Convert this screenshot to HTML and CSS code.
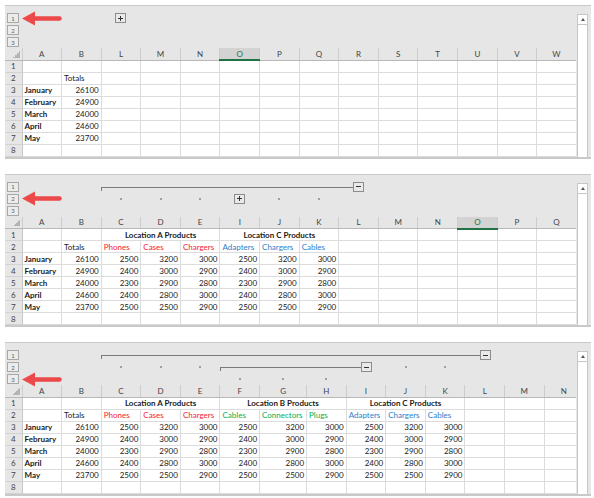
FILE: index.html
```html
<!DOCTYPE html>
<html lang="en">
<head>
    <meta charset="UTF-8">
    <title>Excel outline levels</title>
    <link rel="stylesheet" href="styles.css">
</head>
<body>
    <!-- Panel 1: level 1 collapsed -->
    <div class="sheet">
        <div class="main">
            <div class="outline cols-std">
                <div class="lvl l1">1</div>
                <div class="lvl l2">2</div>
                <div class="lvl l3">3</div>
                <svg class="arrow l1" width="40" height="15" viewBox="0 0 40 15"><path d="M0 7.5L13 0.5V14.5Z" fill="#ec4a4a"/><path d="M12 7.5H37.5" stroke="#ec4a4a" stroke-width="4.4" stroke-linecap="round"/></svg>
                <div class="btn l1" style="grid-column: 4"><svg width="5" height="5"><path d="M0 2.5H5M2.5 0V5" stroke="#333"/></svg></div>
            </div>
            <table class="grid">
                <colgroup><col class="rh"><col><col><col><col><col><col><col><col><col><col><col><col><col><col></colgroup>
                <tr class="head"><th class="corner"></th><th>A</th><th>B</th><th>L</th><th>M</th><th>N</th><th class="sel">O</th><th>P</th><th>Q</th><th>R</th><th>S</th><th>T</th><th>U</th><th>V</th><th>W</th></tr>
                <tr><th>1</th><td></td><td></td><td></td><td></td><td></td><td></td><td></td><td></td><td></td><td></td><td></td><td></td><td></td><td></td></tr>
                <tr><th>2</th><td></td><td>Totals</td><td></td><td></td><td></td><td></td><td></td><td></td><td></td><td></td><td></td><td></td><td></td><td></td></tr>
                <tr><th>3</th><td class="b">January</td><td class="n">26100</td><td></td><td></td><td></td><td></td><td></td><td></td><td></td><td></td><td></td><td></td><td></td><td></td></tr>
                <tr><th>4</th><td class="b">February</td><td class="n">24900</td><td></td><td></td><td></td><td></td><td></td><td></td><td></td><td></td><td></td><td></td><td></td><td></td></tr>
                <tr><th>5</th><td class="b">March</td><td class="n">24000</td><td></td><td></td><td></td><td></td><td></td><td></td><td></td><td></td><td></td><td></td><td></td><td></td></tr>
                <tr><th>6</th><td class="b">April</td><td class="n">24600</td><td></td><td></td><td></td><td></td><td></td><td></td><td></td><td></td><td></td><td></td><td></td><td></td></tr>
                <tr><th>7</th><td class="b">May</td><td class="n">23700</td><td></td><td></td><td></td><td></td><td></td><td></td><td></td><td></td><td></td><td></td><td></td><td></td></tr>
                <tr><th>8</th><td></td><td></td><td></td><td></td><td></td><td></td><td></td><td></td><td></td><td></td><td></td><td></td><td></td><td></td></tr>
            </table>
        </div>
        <div class="vscroll"><div class="up"></div></div>
    </div>

    <!-- Panel 2: level 2, Location B collapsed -->
    <div class="sheet">
        <div class="main">
            <div class="outline cols-std">
                <div class="lvl l1">1</div>
                <div class="lvl l2">2</div>
                <div class="lvl l3">3</div>
                <svg class="arrow l2" width="40" height="15" viewBox="0 0 40 15"><path d="M0 7.5L13 0.5V14.5Z" fill="#ec4a4a"/><path d="M12 7.5H37.5" stroke="#ec4a4a" stroke-width="4.4" stroke-linecap="round"/></svg>
                <div class="bracket l1" style="grid-column: 4 / 11"><span class="line"></span><span class="btn"><svg width="5" height="5"><path d="M0 2.5H5" stroke="#333"/></svg></span></div>
                <span class="dot l2" style="grid-column: 4"></span>
                <span class="dot l2" style="grid-column: 5"></span>
                <span class="dot l2" style="grid-column: 6"></span>
                <div class="btn l2" style="grid-column: 7"><svg width="5" height="5"><path d="M0 2.5H5M2.5 0V5" stroke="#333"/></svg></div>
                <span class="dot l2" style="grid-column: 8"></span>
                <span class="dot l2" style="grid-column: 9"></span>
            </div>
            <table class="grid">
                <colgroup><col class="rh"><col><col><col><col><col><col><col><col><col><col><col><col><col><col></colgroup>
                <tr class="head"><th class="corner"></th><th>A</th><th>B</th><th>C</th><th>D</th><th>E</th><th>I</th><th>J</th><th>K</th><th>L</th><th>M</th><th>N</th><th class="sel">O</th><th>P</th><th>Q</th></tr>
                <tr><th>1</th><td></td><td></td><td colspan="3" class="b c">Location A Products</td><td colspan="3" class="b c">Location C Products</td><td></td><td></td><td></td><td></td><td></td><td></td></tr>
                <tr><th>2</th><td></td><td>Totals</td><td class="red">Phones</td><td class="red">Cases</td><td class="red">Chargers</td><td class="blue">Adapters</td><td class="blue">Chargers</td><td class="blue">Cables</td><td></td><td></td><td></td><td></td><td></td><td></td></tr>
                <tr><th>3</th><td class="b">January</td><td class="n">26100</td><td class="n">2500</td><td class="n">3200</td><td class="n">3000</td><td class="n">2500</td><td class="n">3200</td><td class="n">3000</td><td></td><td></td><td></td><td></td><td></td><td></td></tr>
                <tr><th>4</th><td class="b">February</td><td class="n">24900</td><td class="n">2400</td><td class="n">3000</td><td class="n">2900</td><td class="n">2400</td><td class="n">3000</td><td class="n">2900</td><td></td><td></td><td></td><td></td><td></td><td></td></tr>
                <tr><th>5</th><td class="b">March</td><td class="n">24000</td><td class="n">2300</td><td class="n">2900</td><td class="n">2800</td><td class="n">2300</td><td class="n">2900</td><td class="n">2800</td><td></td><td></td><td></td><td></td><td></td><td></td></tr>
                <tr><th>6</th><td class="b">April</td><td class="n">24600</td><td class="n">2400</td><td class="n">2800</td><td class="n">3000</td><td class="n">2400</td><td class="n">2800</td><td class="n">3000</td><td></td><td></td><td></td><td></td><td></td><td></td></tr>
                <tr><th>7</th><td class="b">May</td><td class="n">23700</td><td class="n">2500</td><td class="n">2500</td><td class="n">2900</td><td class="n">2500</td><td class="n">2500</td><td class="n">2900</td><td></td><td></td><td></td><td></td><td></td><td></td></tr>
                <tr><th>8</th><td></td><td></td><td></td><td></td><td></td><td></td><td></td><td></td><td></td><td></td><td></td><td></td><td></td><td></td></tr>
            </table>
        </div>
        <div class="vscroll"><div class="up"></div></div>
    </div>

    <!-- Panel 3: level 3, everything expanded -->
    <div class="sheet">
        <div class="main">
            <div class="outline cols-wide">
                <div class="lvl l1">1</div>
                <div class="lvl l2">2</div>
                <div class="lvl l3">3</div>
                <svg class="arrow l3" width="40" height="15" viewBox="0 0 40 15"><path d="M0 7.5L13 0.5V14.5Z" fill="#ec4a4a"/><path d="M12 7.5H37.5" stroke="#ec4a4a" stroke-width="4.4" stroke-linecap="round"/></svg>
                <div class="bracket l1" style="grid-column: 4 / 14"><span class="line"></span><span class="btn"><svg width="5" height="5"><path d="M0 2.5H5" stroke="#333"/></svg></span></div>
                <span class="dot l2" style="grid-column: 4"></span>
                <span class="dot l2" style="grid-column: 5"></span>
                <span class="dot l2" style="grid-column: 6"></span>
                <div class="bracket l2" style="grid-column: 7 / 11"><span class="line"></span><span class="btn"><svg width="5" height="5"><path d="M0 2.5H5" stroke="#333"/></svg></span></div>
                <span class="dot l2" style="grid-column: 11"></span>
                <span class="dot l2" style="grid-column: 12"></span>
                <span class="dot l3" style="grid-column: 7"></span>
                <span class="dot l3" style="grid-column: 8"></span>
                <span class="dot l3" style="grid-column: 9"></span>
            </div>
            <table class="grid wide">
                <colgroup><col class="rh"><col><col><col><col><col><col><col class="g"><col><col><col><col><col><col><col></colgroup>
                <tr class="head"><th class="corner"></th><th>A</th><th>B</th><th>C</th><th>D</th><th>E</th><th>F</th><th>G</th><th>H</th><th>I</th><th>J</th><th>K</th><th>L</th><th>M</th><th>N</th></tr>
                <tr><th>1</th><td></td><td></td><td colspan="3" class="b c">Location A Products</td><td colspan="3" class="b c">Location B Products</td><td colspan="3" class="b c">Location C Products</td><td></td><td></td><td></td></tr>
                <tr><th>2</th><td></td><td>Totals</td><td class="red">Phones</td><td class="red">Cases</td><td class="red">Chargers</td><td class="green">Cables</td><td class="green">Connectors</td><td class="green">Plugs</td><td class="blue">Adapters</td><td class="blue">Chargers</td><td class="blue">Cables</td><td></td><td></td><td></td></tr>
                <tr><th>3</th><td class="b">January</td><td class="n">26100</td><td class="n">2500</td><td class="n">3200</td><td class="n">3000</td><td class="n">2500</td><td class="n">3200</td><td class="n">3000</td><td class="n">2500</td><td class="n">3200</td><td class="n">3000</td><td></td><td></td><td></td></tr>
                <tr><th>4</th><td class="b">February</td><td class="n">24900</td><td class="n">2400</td><td class="n">3000</td><td class="n">2900</td><td class="n">2400</td><td class="n">3000</td><td class="n">2900</td><td class="n">2400</td><td class="n">3000</td><td class="n">2900</td><td></td><td></td><td></td></tr>
                <tr><th>5</th><td class="b">March</td><td class="n">24000</td><td class="n">2300</td><td class="n">2900</td><td class="n">2800</td><td class="n">2300</td><td class="n">2900</td><td class="n">2800</td><td class="n">2300</td><td class="n">2900</td><td class="n">2800</td><td></td><td></td><td></td></tr>
                <tr><th>6</th><td class="b">April</td><td class="n">24600</td><td class="n">2400</td><td class="n">2800</td><td class="n">3000</td><td class="n">2400</td><td class="n">2800</td><td class="n">3000</td><td class="n">2400</td><td class="n">2800</td><td class="n">3000</td><td></td><td></td><td></td></tr>
                <tr><th>7</th><td class="b">May</td><td class="n">23700</td><td class="n">2500</td><td class="n">2500</td><td class="n">2900</td><td class="n">2500</td><td class="n">2500</td><td class="n">2900</td><td class="n">2500</td><td class="n">2500</td><td class="n">2900</td><td></td><td></td><td></td></tr>
                <tr><th>8</th><td></td><td></td><td></td><td></td><td></td><td></td><td></td><td></td><td></td><td></td><td></td><td></td><td></td><td></td></tr>
            </table>
        </div>
        <div class="vscroll"><div class="up"></div></div>
    </div>
</body>
</html>
```

FILE: styles.css
```css
* {
    margin: 0;
    padding: 0;
    box-sizing: border-box;
}

body {
    background: #fff;
    font-family: Lato, 'Liberation Sans', sans-serif;
    padding: 5px 0 0 5px;
}

.sheet {
    display: flex;
    width: 586px;
    background: #e6e6e6;
    border-top: 1px solid #c9c9c9;
    border-bottom: 2px solid #c9c9c9;
    margin-bottom: 15px;
}

.main {
    width: 572px;
    overflow: hidden;
}

/* outline symbols above the column headers */
.outline {
    display: grid;
    grid-template-rows: 6px 12px 12px 12px;
}

.cols-std {
    grid-template-columns: 17px repeat(14, 39.6px);
}

.cols-wide {
    grid-template-columns: 17px repeat(6, 39.6px) 47px repeat(7, 39.6px);
}

.l1 { grid-row: 2; }
.l2 { grid-row: 3; }
.l3 { grid-row: 4; }

.lvl {
    grid-column: 1;
    width: 12px;
    height: 10px;
    margin-left: 2px;
    align-self: center;
    border: 1px solid #a8a8a8;
    background: #ececec;
    color: #666;
    font-size: 6px;
    display: flex;
    align-items: center;
    justify-content: center;
}

.arrow {
    grid-column: 2 / 4;
    justify-self: start;
    align-self: center;
    margin: -2px 0;
    z-index: 2;
}

.btn {
    width: 11px;
    height: 10px;
    border: 1px solid #8c8c8c;
    background: #e9e9e9;
    display: flex;
    align-items: center;
    justify-content: center;
    justify-self: center;
    align-self: center;
}

.bracket {
    display: flex;
    align-items: center;
    padding-right: 14px;
}

.bracket .line {
    flex: 1;
    height: 4px;
    margin-top: 4px;
    border-top: 1px solid #7a7a7a;
    border-left: 1px solid #7a7a7a;
}

.dot {
    width: 2px;
    height: 2px;
    background: #a0a0a0;
    justify-self: center;
    align-self: center;
}

/* the cell grid */
.grid {
    border-collapse: collapse;
    table-layout: fixed;
    width: 571.4px;
    font-size: 8px;
    color: #1a1a1a;
}

.grid.wide {
    width: 578.8px;
}

.grid col { width: 39.6px; }
.grid col.rh { width: 17px; }
.grid col.g { width: 47px; }

.grid tr {
    height: 12px;
}

.grid td {
    background: #fff;
    border: 1px solid #dcdcdc;
    padding: 0 2px;
    line-height: 10px;
    white-space: nowrap;
    overflow: hidden;
}

.grid th {
    background: #e6e6e6;
    font-weight: normal;
    color: #444;
    font-size: 8px;
    line-height: 10px;
    border-bottom: 1px solid #d2d2d2;
    border-right: 1px solid #c6c6c6;
}

.grid .head th {
    border-right: 1px solid #cdcdcd;
    border-bottom: 1px solid #b8b8b8;
}

.grid .head th.sel {
    background: #d3d3d3;
    color: #217346;
    border-bottom: 2px solid #217346;
}

.grid .head th.corner {
    background: #e6e6e6 linear-gradient(to bottom right, transparent 50%, #b4b4b4 50%) no-repeat right 2px bottom 2px / 7px 7px;
}

.b { font-weight: bold; }
.c { text-align: center; }
.n { text-align: right; }
.red { color: #f5222d; }
.green { color: #00b050; }
.blue { color: #2a80cc; }

/* vertical scroll bar */
.vscroll {
    width: 11px;
    margin: 8px 3px 0 1px;
    background: #fff;
    border: 1px solid #c6c6c6;
    border-bottom: none;
}

.up {
    height: 10px;
    border-bottom: 1px solid #c6c6c6;
    display: flex;
    align-items: center;
    justify-content: center;
}

.up::before {
    content: '';
    border-left: 2.5px solid transparent;
    border-right: 2.5px solid transparent;
    border-bottom: 3px solid #555;
}
```
